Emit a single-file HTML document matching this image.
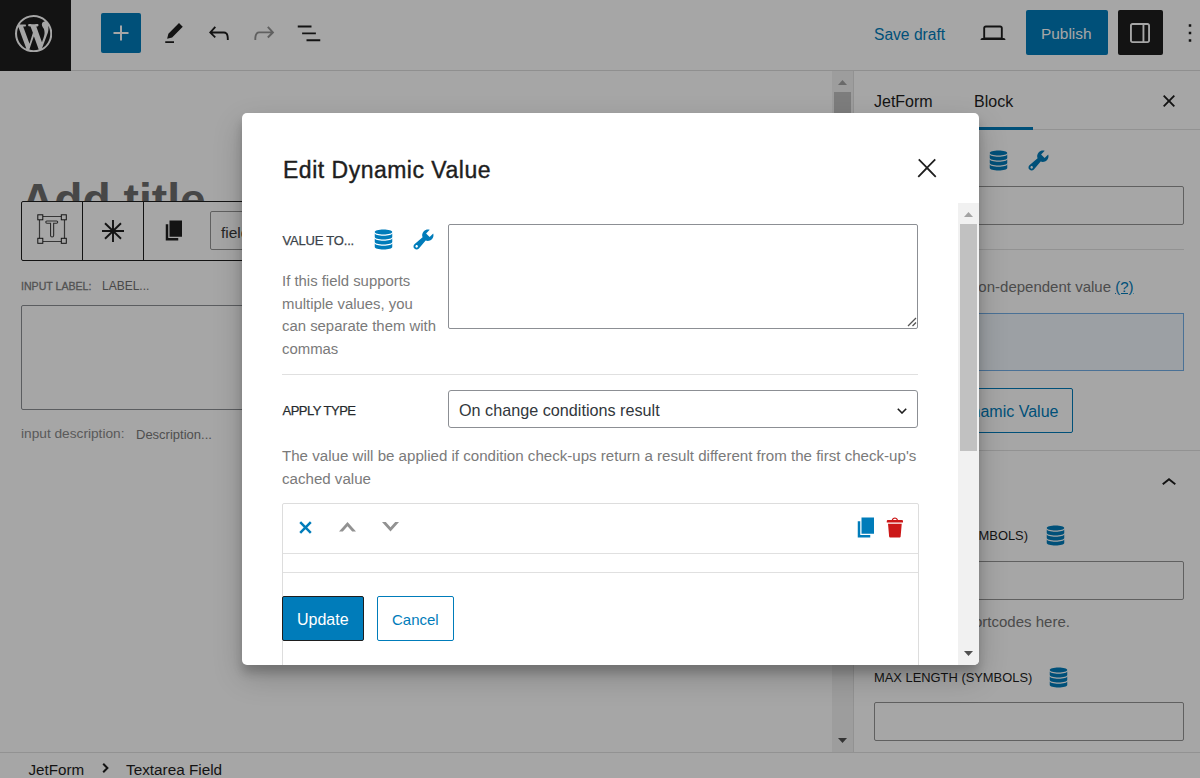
<!DOCTYPE html>
<html><head><meta charset="utf-8">
<style>
*{box-sizing:border-box;margin:0;padding:0}
html,body{width:1200px;height:778px;overflow:hidden;background:#fff}
body{position:relative;font-family:"Liberation Sans",sans-serif;color:#1e1e1e}
.a{position:absolute}
.t{position:absolute;white-space:nowrap;line-height:1}
svg{position:absolute;display:block}
</style></head><body>

<!-- ===== HEADER ===== -->
<div class="a" style="left:0;top:0;width:1200px;height:70px;background:#fff;border-bottom:1px solid #dcdcdc;height:71px"></div>
<div class="a" style="left:0;top:0;width:71px;height:71px;background:#1e1e1e"></div>
<svg style="left:14.8px;top:14.8px" width="37.3" height="37.3" viewBox="0 0 20 20"><path fill="#fff" d="M20 10c0-5.51-4.49-10-10-10C4.48 0 0 4.49 0 10c0 5.52 4.48 10 10 10 5.51 0 10-4.48 10-10zM7.780 15.370L4.370 6.220c.55-.02 1.170-.08 1.170-.08.5-.06.44-1.130-.06-1.110 0 0-1.450.11-2.370.11-.18 0-.37 0-.58-.01C4.120 2.690 6.870 1.110 10 1.110c2.330 0 4.450.87 6.050 2.340-.68-.11-1.650.39-1.650 1.580 0 .74.45 1.360.9 2.100.35.61.55 1.360.55 2.460 0 1.490-1.400 5-1.400 5l-3.030-8.370c.54-.02.82-.17.82-.17.5-.05.44-1.250-.06-1.220 0 0-1.440.12-2.380.12-.87 0-2.330-.12-2.330-.12-.5-.03-.56 1.200-.06 1.220l.92.08 1.260 3.410zM17.410 10c.24-.64.74-1.870.43-4.250.7 1.290 1.050 2.710 1.050 4.250 0 3.290-1.730 6.240-4.400 7.780.97-2.590 1.940-5.200 2.920-7.780zM6.100 18.090C3.120 16.650 1.110 13.530 1.110 10c0-1.300.23-2.480.72-3.590C3.250 10.300 4.670 14.200 6.100 18.090zm4.030-6.630l2.580 6.980c-.86.29-1.760.45-2.710.45-.79 0-1.570-.11-2.290-.33.81-2.380 1.620-4.740 2.420-7.100z"/></svg>
<div class="a" style="left:101px;top:13px;width:40px;height:40px;background:#007cba;border-radius:2px"></div>
<svg style="left:106px;top:18px" width="30" height="30" viewBox="0 0 24 24"><path fill="#fff" d="M18 11.2h-5.2V6h-1.6v5.2H6v1.6h5.2V18h1.6v-5.2H18z"/></svg>
<svg style="left:159px;top:18px" width="30" height="30" viewBox="0 0 24 24"><path fill="#1e1e1e" d="m19 7-3-3-8.5 8.5-1 4 4-1L19 7Zm-7 11.5H5V20h7v-1.5Z"/></svg>
<svg style="left:204px;top:18px" width="30" height="30" viewBox="0 0 24 24"><path fill="#1e1e1e" d="M18.3 11.7c-.6-.6-1.4-.9-2.3-.9H6.7l2.9-3.3-1.1-1-4.5 5L8.5 16l1-1-2.7-2.7H16c.5 0 .9.2 1.300.5 1 1 1 3.400 1 4.500v.3h1.500v-.2c0-1.500 0-4.300-1.500-5.700z"/></svg>
<svg style="left:249px;top:18px" width="30" height="30" viewBox="0 0 24 24"><path fill="#949494" d="M15.6 6.5l-1.1 1 2.9 3.3H8c-.9 0-1.700.3-2.300.9-1.400 1.500-1.400 4.200-1.400 5.600v.2h1.500v-.3c0-1.100 0-3.500 1-4.500.3-.3.7-.5 1.300-.5h9.200L14.500 15l1.100 1.100 4.600-4.600-4.600-5z"/></svg>
<svg style="left:294px;top:18px" width="30" height="30" viewBox="0 0 24 24"><path fill="#1e1e1e" d="M3 6h11v1.5H3V6Zm3.5 5.5h11V13h-11v-1.5ZM10 17h11v1.5H10V17Z"/></svg>

<div class="t" style="left:874px;top:27px;font-size:15.6px;color:#007cba">Save draft</div>
<svg style="left:978px;top:18px" width="30" height="30" viewBox="0 0 24 24"><path fill="#1e1e1e" d="M20.5 16h-.7V8c0-1.1-.9-2-2-2H6.2c-1.1 0-2 .9-2 2v8h-.7c-.8 0-1.5.7-1.5 1.5h20c0-.8-.7-1.5-1.5-1.5zM5.7 8c0-.3.2-.5.5-.5h11.6c.3 0 .5.2.5.5v7.6H5.7V8z"/></svg>
<div class="a" style="left:1026px;top:10px;width:82px;height:45px;background:#007cba;border-radius:2px"></div>
<div class="t" style="left:1041px;top:26px;font-size:15.4px;color:#fff">Publish</div>
<div class="a" style="left:1118px;top:10px;width:45px;height:45px;background:#1e1e1e;border-radius:2px"></div>
<svg style="left:1125px;top:18px" width="30" height="30" viewBox="0 0 24 24"><path fill="#fff" fill-rule="evenodd" d="M18 4H6c-1.1 0-2 .9-2 2v12c0 1.1.9 2 2 2h12c1.1 0 2-.9 2-2V6c0-1.1-.9-2-2-2zm-4 14.5H6c-.3 0-.5-.2-.5-.5V6c0-.3.2-.5.5-.5h8v13zm4.5-.5c0 .3-.2.5-.5.5h-2.5v-13H18c.3 0 .5.2.5.5v12z"/></svg>
<svg style="left:1175px;top:18px" width="30" height="30" viewBox="0 0 24 24"><path fill="#1e1e1e" d="M13 19h-2v-2h2v2zm0-6h-2v-2h2v2zm0-6h-2V5h2v2z"/></svg>

<!-- ===== EDITOR CANVAS ===== -->
<div class="t" style="left:21px;top:177px;font-size:46.2px;font-weight:700;color:#6e6e6e">Add title</div>

<div class="a" style="left:21px;top:201px;width:260px;height:60px;border:1px solid #1e1e1e;border-radius:2px;background:#fff"></div>
<div class="a" style="left:82px;top:202px;width:1px;height:58px;background:#1e1e1e"></div>
<div class="a" style="left:143px;top:202px;width:1px;height:58px;background:#1e1e1e"></div>
<!-- text icon -->
<svg style="left:36px;top:213px" width="32" height="32" viewBox="0 0 32 32">
 <g fill="none" stroke="#1e1e1e" stroke-width="1">
  <path d="M6.5 3.5H26.5M6.5 28.5H26.5M3.5 6.5V26.5M28.5 6.5V26.5" stroke="#555" stroke-width="1.2"/>
  <rect x="1.8" y="1.8" width="5" height="5" fill="#fff"/>
  <rect x="25.3" y="1.8" width="5" height="5" fill="#fff"/>
  <rect x="1.8" y="25.3" width="5" height="5" fill="#fff"/>
  <rect x="25.3" y="25.3" width="5" height="5" fill="#fff"/>
  <path d="M10.9 7.95H20.6A1.125 1.125 0 0 1 20.6 10.2H17.65V22.4A1.55 1.55 0 0 1 14.55 22.4V10.2H10.9A1.125 1.125 0 0 1 10.9 7.95Z" stroke="#444" stroke-width="1.1"/>
 </g>
</svg>
<!-- asterisk -->
<svg style="left:101px;top:219px" width="24" height="24" viewBox="0 0 24 24"><g stroke="#1e1e1e" stroke-width="1.9"><path d="M12 1v22M1 12h22M4 4.2l16 15.6M20 4.2L4 19.8"/></g></svg>
<!-- copy -->
<svg style="left:161.5px;top:217.8px" width="25" height="25" viewBox="0 0 20 20"><path fill="#1e1e1e" d="M6 15V2h10v13H6zm-1 1h8v2H3V5h2v11z"/></svg>
<div class="a" style="left:210px;top:211px;width:80px;height:39px;border:1px solid #949494;border-radius:2px"></div>
<div class="t" style="left:221px;top:225px;font-size:15.5px;color:#3a3a3a">field_name</div>

<div class="t" style="left:21px;top:281px;font-size:10.6px;color:#808080;-webkit-text-stroke:0.3px #808080">INPUT LABEL:</div>
<div class="t" style="left:102px;top:280px;font-size:12px;color:#707070">LABEL...</div>
<div class="a" style="left:21px;top:305px;width:400px;height:105px;border:1px solid #8c8f94;border-radius:2px"></div>
<div class="t" style="left:21px;top:427px;font-size:13.7px;color:#8a8a8a">input description:</div>
<div class="t" style="left:136px;top:428px;font-size:13px;color:#7a7a7a">Description...</div>

<!-- editor scrollbar -->
<div class="a" style="left:832px;top:71px;width:21px;height:681px;background:#f1f1f1"></div>
<div class="a" style="left:834px;top:92px;width:17px;height:200px;background:#c1c1c1"></div>
<svg style="left:838px;top:80px" width="9" height="5" viewBox="0 0 9 5"><path d="M0 5L4.5 0 9 5z" fill="#a3a3a3"/></svg>
<svg style="left:838px;top:738px" width="9" height="5" viewBox="0 0 9 5"><path d="M0 0L4.5 5 9 0z" fill="#505050"/></svg>

<!-- ===== SIDEBAR ===== -->
<div class="a" style="left:853px;top:71px;width:1px;height:681px;background:#e0e0e0"></div>
<div class="t" style="left:874px;top:94px;font-size:16px">JetForm</div>
<div class="t" style="left:974px;top:94px;font-size:16px">Block</div>
<div class="a" style="left:854px;top:129px;width:346px;height:1px;background:#e0e0e0"></div>
<div class="a" style="left:954px;top:127px;width:79px;height:3px;background:#007cba"></div>
<svg style="left:1154px;top:86px" width="30" height="30" viewBox="0 0 24 24"><path fill="#1e1e1e" d="M12 13.06l3.712 3.713 1.061-1.06L13.061 12l3.712-3.712-1.06-1.06L12 10.938 8.288 7.227l-1.061 1.06L10.939 12l-3.712 3.712 1.06 1.061L12 13.061z"/></svg>

<svg style="left:986px;top:147.8px" width="25" height="25" viewBox="0 0 20 20"><path fill="#007cba" d="M10 6c3.9 0 7-.9 7-2s-3.1-2-7-2-7 .9-7 2 3.1 2 7 2zm0 9c-3.9 0-7-.9-7-2v3c0 1.1 3.1 2 7 2s7-.9 7-2v-3c0 1.1-3.1 2-7 2zm0-4c-3.9 0-7-.9-7-2v3c0 1.1 3.1 2 7 2s7-.9 7-2V9c0 1.1-3.1 2-7 2zm0-4c-3.9 0-7-.9-7-2v3c0 1.1 3.1 2 7 2s7-.9 7-2V5c0 1.1-3.1 2-7 2z"/></svg>
<svg style="left:1026px;top:148.2px" width="25" height="25" viewBox="0 0 20 20"><path fill="#007cba" d="M16.68 9.77c-1.34 1.34-3.3 1.67-4.95.99l-5.41 6.52c-.99.99-2.59.99-3.58 0s-.99-2.59 0-3.57l6.52-5.42c-.68-1.65-.35-3.61.99-4.95 1.28-1.28 3.12-1.62 4.72-1.06l-2.89 2.890 2.82 2.82 2.86-2.870c.53 1.58.18 3.39-1.08 4.65zM3.81 16.21c.4.39 1.04.39 1.43 0 .4-.4.4-1.04 0-1.43-.39-.4-1.03-.4-1.43 0-.39.39-.39 1.03 0 1.43z"/></svg>
<div class="a" style="left:874px;top:186px;width:310px;height:39px;border:1px solid #949494;border-radius:2px"></div>
<div class="a" style="left:874px;top:249px;width:310px;height:1px;background:#e0e0e0"></div>
<div class="t" style="left:905px;top:279px;font-size:15px;color:#757575">Set Condition-dependent value <span style="color:#007cba;text-decoration:underline">(?)</span></div>
<div class="a" style="left:874px;top:313px;width:310px;height:58px;border:1px solid #72aee6;background:#f0f6fc"></div>
<div class="a" style="left:900px;top:388px;width:173px;height:45px;border:1px solid #007cba;border-radius:2px"></div>
<div class="t" style="left:920px;top:404px;font-size:16px;color:#007cba">Edit Dynamic Value</div>
<div class="a" style="left:854px;top:450px;width:346px;height:1px;background:#e0e0e0"></div>
<svg style="left:1154px;top:468px" width="30" height="30" viewBox="0 0 24 24"><path fill="#1e1e1e" d="M6.5 12.4L12 8l5.5 4.4-.9 1.2L12 10l-4.5 3.6-1-1.2z"/></svg>
<div class="t" style="left:874px;top:530px;font-size:12.9px;color:#1e1e1e">MIN LENGTH (SYMBOLS)</div>
<svg style="left:1042.7px;top:522.5px" width="25" height="25" viewBox="0 0 20 20"><path fill="#007cba" d="M10 6c3.9 0 7-.9 7-2s-3.1-2-7-2-7 .9-7 2 3.1 2 7 2zm0 9c-3.9 0-7-.9-7-2v3c0 1.1 3.1 2 7 2s7-.9 7-2v-3c0 1.1-3.1 2-7 2zm0-4c-3.9 0-7-.9-7-2v3c0 1.1 3.1 2 7 2s7-.9 7-2V9c0 1.1-3.1 2-7 2zm0-4c-3.9 0-7-.9-7-2v3c0 1.1 3.1 2 7 2s7-.9 7-2V5c0 1.1-3.1 2-7 2z"/></svg>
<div class="a" style="left:874px;top:561px;width:310px;height:39px;border:1px solid #949494;border-radius:2px"></div>
<div class="t" style="left:872px;top:614px;font-size:15px;color:#757575">You can use shortcodes here.</div>
<div class="t" style="left:874px;top:671.7px;font-size:12.9px;color:#1e1e1e">MAX LENGTH (SYMBOLS)</div>
<svg style="left:1045.6px;top:664.5px" width="25" height="25" viewBox="0 0 20 20"><path fill="#007cba" d="M10 6c3.9 0 7-.9 7-2s-3.1-2-7-2-7 .9-7 2 3.1 2 7 2zm0 9c-3.9 0-7-.9-7-2v3c0 1.1 3.1 2 7 2s7-.9 7-2v-3c0 1.1-3.1 2-7 2zm0-4c-3.9 0-7-.9-7-2v3c0 1.1 3.1 2 7 2s7-.9 7-2V9c0 1.1-3.1 2-7 2zm0-4c-3.9 0-7-.9-7-2v3c0 1.1 3.1 2 7 2s7-.9 7-2V5c0 1.1-3.1 2-7 2z"/></svg>
<div class="a" style="left:874px;top:702px;width:310px;height:39px;border:1px solid #949494;border-radius:2px"></div>

<!-- ===== FOOTER ===== -->
<div class="a" style="left:0;top:752px;width:1200px;height:26px;background:#fff;border-top:1px solid #e0e0e0"></div>
<div class="t" style="left:28.5px;top:762px;font-size:15.2px">JetForm</div>
<svg style="left:100px;top:760px" width="12" height="16" viewBox="0 0 12 16"><path d="M3.2 3.8L7.4 8 3.2 12.2" fill="none" stroke="#1e1e1e" stroke-width="2"/></svg>
<div class="t" style="left:126px;top:762px;font-size:15.3px">Textarea Field</div>

<!-- ===== OVERLAY ===== -->
<div class="a" style="left:0;top:0;width:1200px;height:778px;background:rgba(0,0,0,.35)"></div>

<!-- ===== MODAL ===== -->
<div class="a" style="left:242px;top:113px;width:737px;height:552px;background:#fff;border-radius:5px;box-shadow:0 8px 10px rgba(0,0,0,.18),0 12px 30px rgba(0,0,0,.2);overflow:hidden">
 <div class="t" style="left:41px;top:45.5px;font-size:23px;letter-spacing:0.5px;-webkit-text-stroke:0.4px #1e1e1e;color:#1e1e1e">Edit Dynamic Value</div>
 <svg style="left:670px;top:40px" width="30" height="30" viewBox="0 0 24 24"><path fill="#1e1e1e" d="M13 11.8l6.1-6.3-1-1-6.1 6.2-6.1-6.2-1 1 6.1 6.3-6.5 6.7 1 1 6.5-6.6 6.5 6.6 1-1z"/></svg>

 <!-- scroll area -->
 <div class="a" style="left:716px;top:90px;width:21px;height:462px;background:#f1f1f1"></div>
 <div class="a" style="left:718px;top:111px;width:17px;height:227px;background:#c1c1c1"></div>
 <svg style="left:722px;top:99px" width="9" height="5" viewBox="0 0 9 5"><path d="M0 5L4.5 0 9 5z" fill="#a3a3a3"/></svg>
 <svg style="left:722px;top:538px" width="9" height="5" viewBox="0 0 9 5"><path d="M0 0L4.5 5 9 0z" fill="#505050"/></svg>

 <div class="t" style="left:40.5px;top:121px;font-size:13px;letter-spacing:-0.2px;-webkit-text-stroke:0.25px #3c434a;color:#3c434a">VALUE TO...</div>
 <svg style="left:129px;top:113.6px" width="25" height="25" viewBox="0 0 20 20"><path fill="#007cba" d="M10 6c3.9 0 7-.9 7-2s-3.1-2-7-2-7 .9-7 2 3.1 2 7 2zm0 9c-3.9 0-7-.9-7-2v3c0 1.1 3.1 2 7 2s7-.9 7-2v-3c0 1.1-3.1 2-7 2zm0-4c-3.9 0-7-.9-7-2v3c0 1.1 3.1 2 7 2s7-.9 7-2V9c0 1.1-3.1 2-7 2zm0-4c-3.9 0-7-.9-7-2v3c0 1.1 3.1 2 7 2s7-.9 7-2V5c0 1.1-3.1 2-7 2z"/></svg>
 <svg style="left:169px;top:113.7px" width="25" height="25" viewBox="0 0 20 20"><path fill="#007cba" d="M16.68 9.77c-1.34 1.34-3.3 1.67-4.95.99l-5.41 6.52c-.99.99-2.59.99-3.58 0s-.99-2.59 0-3.57l6.52-5.42c-.68-1.65-.35-3.61.99-4.95 1.28-1.28 3.12-1.62 4.72-1.06l-2.89 2.890 2.82 2.82 2.86-2.870c.53 1.58.18 3.39-1.08 4.65zM3.81 16.21c.4.39 1.04.39 1.43 0 .4-.4.4-1.04 0-1.43-.39-.4-1.03-.4-1.43 0-.39.39-.39 1.03 0 1.43z"/></svg>
 <div class="a" style="left:40px;top:157px;width:156px;font-size:14.9px;line-height:22.5px;color:#7a7a7a">If this field supports multiple values, you can separate them with commas</div>
 <div class="a" style="left:206px;top:111px;width:470px;height:105px;border:1px solid #8c8f94;border-radius:2px"></div>
 <svg style="left:663px;top:202px" width="12" height="12" viewBox="0 0 12 12"><path d="M11 3L3 11M11 7.5L7.5 11" stroke="#555" stroke-width="1.3" fill="none"/></svg>
 <div class="a" style="left:40px;top:261px;width:636px;height:1px;background:#e0e0e0"></div>

 <div class="t" style="left:40.5px;top:291.3px;font-size:13px;letter-spacing:-0.5px;-webkit-text-stroke:0.25px #1e1e1e;color:#2c3338">APPLY TYPE</div>
 <div class="a" style="left:206px;top:277px;width:470px;height:38px;border:1px solid #8c8f94;border-radius:3px"></div>
 <div class="t" style="left:217px;top:289px;font-size:16.2px;color:#32373c">On change conditions result</div>
 <svg style="left:655px;top:295px" width="10" height="6" viewBox="0 0 10 6"><path d="M0.8 0.8L5 5 9.2 0.8" fill="none" stroke="#1e1e1e" stroke-width="1.6"/></svg>
 <div class="a" style="left:40px;top:332.3px;width:640px;font-size:15.1px;line-height:22.5px;color:#7a7a7a">The value will be applied if condition check-ups return a result different from the first check-up's cached value</div>

 <div class="a" style="left:40px;top:390px;width:637px;height:200px;border:1px solid #ddd;border-radius:2px"></div>
 <div class="a" style="left:41px;top:440px;width:635px;height:1px;background:#e0e0e0"></div>
 <div class="a" style="left:41px;top:459px;width:635px;height:1px;background:#e0e0e0"></div>
 <svg style="left:50.6px;top:401.8px" width="25" height="25" viewBox="0 0 20 20"><path fill="#007cba" d="M14.95 6.46L11.41 10l3.54 3.54-1.41 1.41L10 11.42l-3.53 3.53-1.42-1.42L8.58 10 5.05 6.47l1.42-1.42L10 8.58l3.54-3.53z"/></svg>
 <svg style="left:97px;top:409.4px" width="17" height="10" viewBox="0 0 17 10"><path d="M0 9.5L8.5 0 17 9.5H13.2L8.5 4.2 3.8 9.5z" fill="#929292"/></svg>
 <svg style="left:139.5px;top:409.4px" width="17" height="10" viewBox="0 0 17 10"><path d="M0 0L8.5 9.5 17 0H13.2L8.5 5.3 3.8 0z" fill="#929292"/></svg>
 <svg style="left:611.8px;top:401.5px" width="25" height="25" viewBox="0 0 20 20"><path fill="#007cba" d="M6 15V2h10v13H6zm-1 1h8v2H3V5h2v11z"/></svg>
 <svg style="left:640.5px;top:401.9px" width="25" height="25" viewBox="0 0 20 20"><path fill="#cc1818" d="M12 4h3c.6 0 1 .4 1 1v1H3V5c0-.6.5-1 1-1h3c.2-1.1 1.3-2 2.5-2s2.3.9 2.5 2zM8 4h3c-.2-.6-.9-1-1.5-1S8.2 3.4 8 4zM4 7h11l-.9 10.1c0 .5-.5.9-1 .9H5.9c-.5 0-.9-.4-1-.9L4 7z"/></svg>

 <div class="a" style="left:40px;top:483px;width:82px;height:45px;background:#007cba;border:1px solid #1e1e1e;border-radius:2px"></div>
 <div class="t" style="left:55px;top:499px;font-size:16px;color:#fff">Update</div>
 <div class="a" style="left:135px;top:483px;width:77px;height:45px;border:1px solid #007cba;border-radius:2px;background:#fff"></div>
 <div class="t" style="left:150px;top:499px;font-size:15px;color:#007cba">Cancel</div>
</div>

</body></html>
